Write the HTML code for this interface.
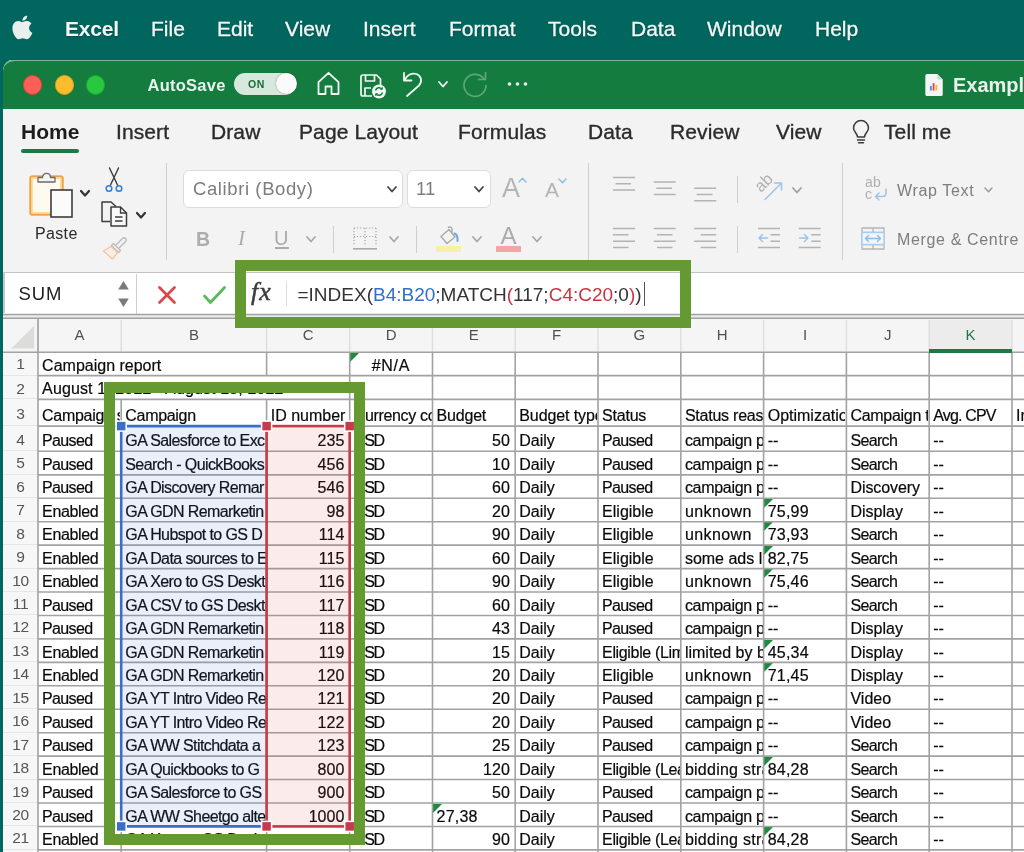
<!DOCTYPE html>
<html lang="en">
<head>
<meta charset="utf-8">
<title>Excel - INDEX MATCH example</title>
<style>
*{box-sizing:border-box;margin:0;padding:0}
html,body{width:1024px;height:852px;overflow:hidden;background:#01665e;}
body{position:relative;font-family:"Liberation Sans",sans-serif;color:#222;}
.abs{position:absolute}
/* ---------- mac menu bar ---------- */
#menubar{position:absolute;left:0;top:0;width:1024px;height:60px;background:#01665e;z-index:2}
#menubar span{position:absolute;top:17px;font-size:21px;line-height:24px;color:#f4f7f6;white-space:nowrap;text-shadow:0 1px 2px rgba(0,0,0,.25);letter-spacing:0;-webkit-text-stroke:.3px #f4f7f6}
#menubar span.b{font-weight:bold;letter-spacing:-.2px;-webkit-text-stroke:0}
/* ---------- window ---------- */
#win{position:absolute;left:3px;top:59px;width:1030px;height:800px;background:#f3f3f3;border-top-left-radius:12px;overflow:hidden;}
#titlebar{position:absolute;left:0;top:0;width:100%;height:50px;background:#157c40;border-top:2px solid #7ab395;border-top-left-radius:12px;}
.tl{position:absolute;top:14px;width:19.500px;height:19.500px;border-radius:50%;}
#titlebar .t{position:absolute;color:#e9f3ec;font-weight:bold;white-space:nowrap}
/* ---------- ribbon ---------- */
#tabs span{position:absolute;top:119px;font-size:21px;line-height:26px;color:#2b2b2b;white-space:nowrap;-webkit-text-stroke:0.35px #2b2b2b;letter-spacing:.1px}
#tabs span.b{font-weight:bold;-webkit-text-stroke:0;color:#1d1d1d;letter-spacing:0}
.vsep{position:absolute;width:1px;background:#cfcfcf}
.dd{position:absolute;background:#fff;border:1px solid #dcdcdc;border-radius:6px;}
.gtxt{position:absolute;color:#7d7d7d;white-space:nowrap}
svg{position:absolute;overflow:visible}
/* ---------- formula bar ---------- */
#fbar{position:absolute;left:3px;top:272px;width:1021px;height:42px;background:#fff;border-top:1px solid #c4c4c4;}
/* ---------- grid ---------- */
#grid{position:absolute;left:0;top:0;width:1024px;height:852px}
#sheet{position:absolute;left:3px;top:319px;width:1021px;height:540px;background:#fff}
#colhdr{position:absolute;left:3px;top:314px;width:1021px;height:38px;background:#f5f5f5;border-top:4px solid #ebebeb;}
#rowhdr{position:absolute;left:3px;top:352px;width:35px;height:500px;background:#f7f7f7}
.ch{position:absolute;top:323.300px;height:24px;line-height:24px;font-size:15px;color:#505050;text-align:center}
.hs{position:absolute;top:321px;width:1.400px;height:31px;background:#dedede}
.hl{position:absolute;left:38px;width:986px;height:1.400px;background:#b9b9b9}
.vl{position:absolute;top:352px;width:1.400px;height:500px;background:#b9b9b9}
.rn{position:absolute;left:3px;width:35px;font-size:15.500px;letter-spacing:-.3px;color:#555;text-align:center;border-bottom:1px solid #e6e6e6}
.c{position:absolute;font-size:16px;color:#0a0a0a;-webkit-text-stroke:.2px #0a0a0a;white-space:nowrap;overflow:hidden;padding-left:3.600px;background:#fff}
.c.r{text-align:right;padding-right:4.500px}
.c.ov{overflow:visible;background:transparent}
.c.ctr{text-align:center;padding-left:0}
.tri{position:absolute;left:0;top:0;width:0;height:0;border-top:9px solid #1e8a3e;border-right:9px solid transparent}
#ov{z-index:5}
#menubar,#win,#fbar,#grid{will-change:transform}
</style>
</head>
<body>
<!-- ======= macOS menu bar ======= -->
<div id="menubar">
  <svg style="left:12px;top:15px" width="22" height="26" viewBox="0 0 22 26"><path fill="#e9efee" d="M15.2 0.4c0.1 1.4-0.4 2.7-1.2 3.7-0.9 1-2.2 1.8-3.5 1.7-0.2-1.3 0.4-2.7 1.2-3.6 0.9-1 2.400-1.700 3.500-1.800zM19.500 8.800c-1.500 0.900-2.400 2.400-2.400 4.200 0 2.100 1.300 3.900 3.200 4.700-0.400 1.300-1 2.500-1.700 3.600-1 1.500-2.100 3-3.800 3-1.600 0-2.100-1-4-1s-2.500 1-4 1c-1.700 0.100-2.900-1.600-3.900-3.100-2-3-3.600-8.500-1.500-12.200 1-1.800 2.900-3 4.900-3 1.600 0 3 1.100 4 1.100 0.900 0 2.700-1.300 4.600-1.100 0.800 0 3 0.300 4.600 2.800z"/></svg>
  <span class="b" style="left:65px">Excel</span>
  <span style="left:151px">File</span>
  <span style="left:217px">Edit</span>
  <span style="left:285px">View</span>
  <span style="left:363px">Insert</span>
  <span style="left:449px">Format</span>
  <span style="left:548px">Tools</span>
  <span style="left:631px">Data</span>
  <span style="left:707px">Window</span>
  <span style="left:815px">Help</span>
</div>

<!-- ======= Excel window ======= -->
<div id="win">
  <div id="titlebar">
    <div class="tl" style="left:19.800px;background:#fe5f57;border:1px solid #d9453d"></div>
    <div class="tl" style="left:51.500px;background:#febc2e;border:1px solid #d9a020"></div>
    <div class="tl" style="left:82.500px;background:#28c840;border:1px solid #1fa533"></div>
    <div class="t" style="left:144.5px;top:12px;font-size:16.500px;line-height:24px;letter-spacing:.25px">AutoSave</div>
    <!-- toggle -->
    <div class="abs" style="left:231px;top:11.5px;width:62px;height:22px;border-radius:11px;background:#d7e9dd;"></div>
    <div class="abs" style="left:245px;top:15.5px;font-size:10.5px;line-height:14px;font-weight:bold;color:#1b6b3b;letter-spacing:.6px">ON</div>
    <div class="abs" style="left:272.5px;top:12px;width:21px;height:21px;border-radius:50%;background:#fafafa;box-shadow:0 0 2px rgba(0,0,0,.4)"></div>
    <!-- home icon -->
    <svg style="left:313.5px;top:10px" width="24" height="25" viewBox="0 0 24 25"><path d="M1.500 11.200 L11.500 1.800 L21.500 11.200 V23 H14.500 V15.500 H8.500 V23 H1.500 Z" fill="none" stroke="#f2f8f4" stroke-width="1.800" stroke-linejoin="round"/></svg>
    <!-- save icon -->
    <svg style="left:356.5px;top:13px" width="27" height="25" viewBox="0 0 27 25"><path d="M3 1 H16.500 L20.500 5 V12 M12 22 H3 Q1 22 1 20 V3 Q1 1 3 1 M5.500 1 V7 H14.500 V1 M5 22 V14 H11" fill="none" stroke="#f2f8f4" stroke-width="1.700" stroke-linejoin="round"/><circle cx="19" cy="17.500" r="7" fill="#f2f8f4"/><path d="M15.500 16.500 a3.800 3.800 0 0 1 6.500 -1.500 M22.500 18.500 a3.800 3.800 0 0 1 -6.500 1.500" fill="none" stroke="#157c40" stroke-width="1.500"/><path d="M22.800 12.800 v3 h-3 z M15.200 22.200 v-3 h3 z" fill="#157c40"/></svg>
    <!-- undo -->
    <svg style="left:399.2px;top:10px" width="22" height="26" viewBox="0 0 22 26"><path d="M2 2 V9.500 H9.500 M2.500 9 C5 4 10 1.500 14.500 3 C19.500 5 20.500 10.500 17 14.500 L5 25" fill="none" stroke="#f2f8f4" stroke-width="1.800" stroke-linecap="round" stroke-linejoin="round"/></svg>
    <svg style="left:434.7px;top:20px" width="10" height="7" viewBox="0 0 10 7"><path d="M1 1 L5 5.500 L9 1" fill="none" stroke="#f2f8f4" stroke-width="1.800" stroke-linecap="round" stroke-linejoin="round"/></svg>
    <!-- redo (dim) -->
    <svg style="left:458.5px;top:10px" width="26" height="26" viewBox="0 0 26 26"><path d="M22 8 A 11 11 0 1 0 24 14.500 M16.500 8.500 H23.500 V1.500" fill="none" stroke="#5fa67b" stroke-width="1.700" stroke-linecap="round" stroke-linejoin="round"/></svg>
    <svg style="left:503px;top:20px" width="24" height="6" viewBox="0 0 24 6"><circle cx="3.500" cy="3" r="1.800" fill="#e9f3ec"/><circle cx="11.500" cy="3" r="1.800" fill="#e9f3ec"/><circle cx="19.500" cy="3" r="1.800" fill="#e9f3ec"/></svg>
    <!-- doc icon -->
    <svg style="left:922px;top:13px" width="19" height="22" viewBox="0 0 20 24"><path d="M2 0 H13 L19 6 V22 Q19 24 17 24 H2 Q0 24 0 22 V2 Q0 0 2 0Z" fill="#f4f6f5"/><path d="M13 0 L19 6 H14 Q13 6 13 5Z" fill="#cfd8d3"/><rect x="5" y="13" width="2" height="5" fill="#4c8bf5"/><rect x="8" y="10" width="2" height="8" fill="#e8453c"/><rect x="11" y="12" width="2" height="6" fill="#f9bb2d"/></svg>
    <div class="t" style="left:950px;top:11px;font-size:20px;line-height:26px;">Example</div>
  </div>

  <!-- tabs -->
  <div id="tabs" style="position:absolute;left:-3px;top:-59px">
    <span class="b" style="left:21px">Home</span>
    <span style="left:116px">Insert</span>
    <span style="left:211px">Draw</span>
    <span style="left:299px">Page Layout</span>
    <span style="left:458px">Formulas</span>
    <span style="left:588px">Data</span>
    <span style="left:670px">Review</span>
    <span style="left:776px">View</span>
    <span style="left:884px">Tell me</span>
    <div class="abs" style="left:21px;top:149px;width:58px;height:4px;border-radius:2px;background:#1b7a43"></div>
    <!-- lightbulb -->
    <svg style="left:852px;top:120px" width="18" height="24" viewBox="0 0 18 24"><path d="M5.500 17 C5.500 13.500 1.500 12 1.500 8 A7.500 7.500 0 0 1 16.500 8 C16.500 12 12.500 13.500 12.500 17 Z M5.500 20 H12.500 M6.500 22.800 H11.500" fill="none" stroke="#3a3a3a" stroke-width="1.500" stroke-linecap="round" stroke-linejoin="round"/></svg>
  </div>
  <div id="ribbon" style="position:absolute;left:-3px;top:-59px;width:1024px;height:272px">
    <!-- Paste -->
    <svg style="left:29px;top:169px" width="45" height="50" viewBox="0 0 45 50">
      <rect x="2" y="8" width="31" height="37" rx="1.500" fill="#fffaf0" stroke="#f6d58a" stroke-width="3.500"/><rect x="1.200" y="7.200" width="32.600" height="38.600" rx="2" fill="none" stroke="#f0a04a" stroke-width="1.600"/>
      <path d="M9 13 V8.500 H13.500 C13.500 3 21.500 3 21.500 8.500 H26 V13 Z" fill="#f4f4f4" stroke="#6a6a6a" stroke-width="1.300" stroke-linejoin="round"/>
      <rect x="22" y="21" width="21" height="27" fill="#fbfbfb" stroke="#3c3c3c" stroke-width="1.600"/>
    </svg>
    <svg style="left:80px;top:190px" width="10" height="7" viewBox="0 0 10 7"><path d="M1 1 L5 5.500 L9 1" fill="none" stroke="#333" stroke-width="2.200" stroke-linecap="round" stroke-linejoin="round"/></svg>
    <div class="abs" style="left:35px;top:223px;font-size:16px;line-height:22px;color:#2a2a2a;letter-spacing:.35px">Paste</div>
    <!-- scissors -->
    <svg style="left:105px;top:167px" width="18" height="26" viewBox="0 0 18 26">
      <path d="M4.500 1 L12.500 18 M13.500 1 L5.500 18" stroke="#3c3c3c" stroke-width="1.400" stroke-linecap="round" fill="none"/>
      <circle cx="4" cy="21.500" r="2.800" fill="none" stroke="#2f7fd6" stroke-width="1.500"/>
      <circle cx="14" cy="21.500" r="2.800" fill="none" stroke="#2f7fd6" stroke-width="1.500"/>
    </svg>
    <!-- copy -->
    <svg style="left:101px;top:201px" width="27" height="26" viewBox="0 0 27 26">
      <path d="M9 20.500 H1 V1 H10 L15 5.500" fill="none" stroke="#3c3c3c" stroke-width="1.500" stroke-linejoin="round"/>
      <path d="M10 6 H19.500 L25.500 12 V25 H10 Z" fill="#f8f8f8" stroke="#3c3c3c" stroke-width="1.500" stroke-linejoin="round"/>
      <path d="M19.500 6 V12 H25.500 M14 16 H21.500 M14 20 H21.500" fill="none" stroke="#3c3c3c" stroke-width="1.300"/>
    </svg>
    <svg style="left:136px;top:212px" width="10" height="7" viewBox="0 0 10 7"><path d="M1 1 L5 5.500 L9 1" fill="none" stroke="#333" stroke-width="2.200" stroke-linecap="round" stroke-linejoin="round"/></svg>
    <!-- format painter (dim) -->
    <svg style="left:102px;top:236px" width="26" height="24" viewBox="0 0 26 24">
      <path d="M14 9 L20.500 2.500 Q22 1 23.500 2.500 Q25 4 23.500 5.500 L17 12" fill="none" stroke="#b9b9b9" stroke-width="1.400"/>
      <path d="M11.500 7.500 L18.500 14.500 L16.500 16.500 L9.500 9.500 Z" fill="#f5f5f5" stroke="#b9b9b9" stroke-width="1.300"/>
      <path d="M9 10.500 L1.500 15 L10.500 23 L15.500 16.500 Z" fill="#fdeee3" stroke="#f3c3a4" stroke-width="1.300" stroke-linejoin="round"/>
    </svg>
    <div class="vsep" style="left:166px;top:163px;height:97px"></div>

    <!-- font name -->
    <div class="dd" style="left:183px;top:170px;width:220px;height:38px"></div>
    <div class="gtxt" style="left:193px;top:176px;font-size:18.500px;line-height:26px;letter-spacing:.6px">Calibri (Body)</div>
    <svg style="left:387px;top:186px" width="10" height="7" viewBox="0 0 10 7"><path d="M1 1 L5 5.500 L9 1" fill="none" stroke="#444" stroke-width="1.800" stroke-linecap="round" stroke-linejoin="round"/></svg>
    <!-- font size -->
    <div class="dd" style="left:407px;top:170px;width:84px;height:38px"></div>
    <div class="gtxt" style="left:416px;top:176px;font-size:18.500px;line-height:26px;">11</div>
    <svg style="left:474px;top:186px" width="10" height="7" viewBox="0 0 10 7"><path d="M1 1 L5 5.500 L9 1" fill="none" stroke="#444" stroke-width="1.800" stroke-linecap="round" stroke-linejoin="round"/></svg>
    <!-- grow / shrink -->
    <div class="abs" style="left:502px;top:173px;font-size:27px;line-height:30px;color:#b4b4b4">A</div>
    <svg style="left:518px;top:177px" width="9" height="6" viewBox="0 0 9 6"><path d="M1 5 L4.500 1.200 L8 5" fill="none" stroke="#8fbde8" stroke-width="1.500" stroke-linecap="round" stroke-linejoin="round"/></svg>
    <div class="abs" style="left:545px;top:178px;font-size:21px;line-height:24px;color:#b4b4b4">A</div>
    <svg style="left:558px;top:178px" width="9" height="6" viewBox="0 0 9 6"><path d="M1 1 L4.500 4.800 L8 1" fill="none" stroke="#8fbde8" stroke-width="1.500" stroke-linecap="round" stroke-linejoin="round"/></svg>

    <!-- B I U -->
    <div class="abs" style="left:196px;top:225.500px;font-size:19.500px;line-height:26px;font-weight:bold;color:#adadad">B</div>
    <div class="abs" style="left:238px;top:225px;font-size:21px;line-height:26px;font-style:italic;color:#ababab;font-family:'Liberation Serif',serif">I</div>
    <div class="abs" style="left:274px;top:225px;font-size:20px;line-height:26px;color:#ababab">U</div>
    <div class="abs" style="left:275px;top:247px;width:14px;height:1.500px;background:#ababab"></div>
    <svg style="left:306px;top:236px" width="10" height="7" viewBox="0 0 10 7"><path d="M1 1 L5 5.500 L9 1" fill="none" stroke="#a8a8a8" stroke-width="1.800" stroke-linecap="round" stroke-linejoin="round"/></svg>
    <div class="vsep" style="left:333px;top:226px;height:27px"></div>
    <!-- borders -->
    <svg style="left:353px;top:227px" width="24" height="23" viewBox="0 0 24 23">
      <path d="M1 1 H23 M1 1 V18 M23 1 V18 M12 1 V18 M1 9.500 H23" fill="none" stroke="#a9a9a9" stroke-width="1.200" stroke-dasharray="1.200 1.800"/>
      <path d="M0 21.800 H24" stroke="#a9a9a9" stroke-width="1.600"/>
    </svg>
    <svg style="left:389px;top:236px" width="10" height="7" viewBox="0 0 10 7"><path d="M1 1 L5 5.500 L9 1" fill="none" stroke="#a8a8a8" stroke-width="1.800" stroke-linecap="round" stroke-linejoin="round"/></svg>
    <div class="vsep" style="left:416px;top:226px;height:27px"></div>
    <!-- fill -->
    <svg style="left:439px;top:226px" width="22" height="19" viewBox="0 0 22 19">
      <path d="M9 1.500 Q12 0 13 3 V7 M2 10.500 L10 3.500 L16 11 L8 17.500 Z" fill="none" stroke="#a9a9a9" stroke-width="1.400" stroke-linejoin="round"/>
      <path d="M15.500 7.500 Q19 8.500 18.500 15" fill="none" stroke="#6aa5e6" stroke-width="2" stroke-linecap="round"/>
    </svg>
    <div class="abs" style="left:436px;top:245.500px;width:25px;height:6px;background:#f6f1a4"></div>
    <svg style="left:472px;top:236px" width="10" height="7" viewBox="0 0 10 7"><path d="M1 1 L5 5.500 L9 1" fill="none" stroke="#a8a8a8" stroke-width="1.800" stroke-linecap="round" stroke-linejoin="round"/></svg>
    <!-- font colour -->
    <div class="abs" style="left:500.500px;top:221.500px;font-size:24px;line-height:28px;color:#ababab">A</div>
    <div class="abs" style="left:495.500px;top:245.500px;width:25px;height:6px;background:#f3a5a5"></div>
    <svg style="left:532px;top:236px" width="10" height="7" viewBox="0 0 10 7"><path d="M1 1 L5 5.500 L9 1" fill="none" stroke="#a8a8a8" stroke-width="1.800" stroke-linecap="round" stroke-linejoin="round"/></svg>

    <div class="vsep" style="left:588px;top:163px;height:97px"></div>
    <!-- vertical align -->
    <svg style="left:613px;top:176px" width="104" height="26" viewBox="0 0 104 26" stroke="#b3b3b3" stroke-width="1.500" fill="none">
      <path d="M0 1.500 H22 M2.500 7.700 H18 M0 14 H22"/>
      <path d="M40.700 6 H62.700 M43.200 12.200 H59 M40.700 18.500 H62.700"/>
      <path d="M81.200 12.200 H103.200 M83.700 18.500 H99.500 M81.200 24.700 H103.200"/>
    </svg>
    <div class="vsep" style="left:737px;top:176px;height:27px"></div>
    <!-- orientation -->
    <svg style="left:755px;top:174px" width="30" height="28" viewBox="0 0 30 28">
      <text x="0" y="0" transform="translate(6,19) rotate(-45)" font-family="Liberation Sans, sans-serif" font-size="16.500" fill="#b0b0b0">ab</text>
      <path d="M10 25.500 L26 9.500 M19.500 9 H26.500 V16" fill="none" stroke="#9cc4ec" stroke-width="1.500" stroke-linecap="round" stroke-linejoin="round"/>
    </svg>
    <svg style="left:792px;top:187px" width="10" height="7" viewBox="0 0 10 7"><path d="M1 1 L5 5.500 L9 1" fill="none" stroke="#a0a0a0" stroke-width="1.800" stroke-linecap="round" stroke-linejoin="round"/></svg>
    <!-- horizontal align -->
    <svg style="left:613px;top:227px" width="104" height="22" viewBox="0 0 104 22" stroke="#b3b3b3" stroke-width="1.500" fill="none">
      <path d="M0 1.500 H22 M0 7.800 H15.500 M0 14.200 H22 M0 20.500 H15.500"/>
      <path d="M40.700 1.500 H62.700 M44 7.800 H59.500 M40.700 14.200 H62.700 M44 20.500 H59.500"/>
      <path d="M81.200 1.500 H103.200 M87.700 7.800 H103.200 M81.200 14.200 H103.200 M87.700 20.500 H103.200"/>
    </svg>
    <div class="vsep" style="left:737px;top:226px;height:27px"></div>
    <!-- indent -->
    <svg style="left:758px;top:227px" width="64" height="22" viewBox="0 0 64 22" fill="none" stroke-width="1.500">
      <path d="M0 1.500 H22 M12.500 7.800 H22 M12.500 14.200 H22 M0 20.500 H22" stroke="#b3b3b3"/>
      <path d="M9.500 11 H1 M4.500 7.500 L1 11 L4.500 14.500" stroke="#9cc4ec" stroke-linecap="round" stroke-linejoin="round"/>
      <path d="M40.700 1.500 H62.700 M53.200 7.800 H62.700 M53.200 14.200 H62.700 M40.700 20.500 H62.700" stroke="#b3b3b3"/>
      <path d="M41.500 11 H50 M46.500 7.500 L50 11 L46.500 14.500" stroke="#9cc4ec" stroke-linecap="round" stroke-linejoin="round"/>
    </svg>
    <div class="vsep" style="left:842px;top:163px;height:97px"></div>
    <!-- wrap text -->
    <div class="abs" style="left:865px;top:175px;font-size:14px;line-height:14px;color:#b0b0b0;letter-spacing:.3px">ab</div>
    <div class="abs" style="left:865px;top:187px;font-size:14px;line-height:14px;color:#b0b0b0">c</div>
    <svg style="left:874px;top:188px" width="14" height="14" viewBox="0 0 14 14"><path d="M12 1 V5 Q12 8.500 8.500 8.500 H1.500 M5 5 L1.500 8.500 L5 12" fill="none" stroke="#9cc4ec" stroke-width="1.500" stroke-linecap="round" stroke-linejoin="round"/></svg>
    <div class="gtxt" style="left:897px;top:179.500px;font-size:16px;line-height:22px;letter-spacing:.65px">Wrap Text</div>
    <svg style="left:984px;top:187px" width="9" height="6" viewBox="0 0 9 6"><path d="M1 1 L4.500 4.800 L8 1" fill="none" stroke="#9c9c9c" stroke-width="1.500" stroke-linecap="round" stroke-linejoin="round"/></svg>
    <!-- merge -->
    <svg style="left:861px;top:227px" width="24" height="23" viewBox="0 0 24 23">
      <path d="M1 1 H23 V22 H1 Z M1 5.500 H23 M1 17.500 H23 M12 1 V5.500 M12 17.500 V22" fill="none" stroke="#b5b5b5" stroke-width="1.300"/>
      <rect x="1" y="5.500" width="22" height="12" fill="#eef5fc" stroke="#a9cbee" stroke-width="1.300"/>
      <path d="M4.500 11.500 H19.500 M7.500 8.500 L4.500 11.500 L7.500 14.500 M16.500 8.500 L19.500 11.500 L16.500 14.500" fill="none" stroke="#8fbbe9" stroke-width="1.400" stroke-linecap="round" stroke-linejoin="round"/>
    </svg>
    <div class="gtxt" style="left:897px;top:229px;font-size:16px;line-height:22px;letter-spacing:.65px">Merge &amp; Centre</div>
</div>

</div>

<div id="fbar">
  <!-- inner coords: x = page-3, y = page-273 -->
  <div class="abs" style="left:15.500px;top:7.800px;font-size:18.500px;line-height:26px;color:#222;letter-spacing:.9px">SUM</div>
  <svg style="left:114.500px;top:8px" width="11" height="27" viewBox="0 0 11 27"><path d="M5.500 0 L10.800 8.500 H0.200 Z M5.500 26 L10.800 17.500 H0.200 Z" fill="#7a7a7a"/></svg>
  <div class="abs" style="left:132.600px;top:1px;width:1.600px;height:40px;background:#cfcfcf"></div>
  <div class="abs" style="left:0.300px;top:0;width:1.300px;height:40px;background:#c9c9c9"></div>
  <!-- cancel / enter -->
  <svg style="left:155px;top:13px" width="18" height="18" viewBox="0 0 18 18"><path d="M1.500 1.500 L16.500 16.500 M16.500 1.500 L1.500 16.500" stroke="#d8494d" stroke-width="2.800" stroke-linecap="round"/></svg>
  <svg style="left:200px;top:13px" width="23" height="19" viewBox="0 0 23 19"><path d="M1.500 10 L7.500 16.500 L21.500 1.500" fill="none" stroke="#5cb85c" stroke-width="2.800" stroke-linecap="round" stroke-linejoin="round"/></svg>
  <!-- fx -->
  <div class="abs" style="left:248px;top:4px;font-family:'Liberation Serif',serif;font-style:italic;font-size:26px;line-height:30px;color:#3d3d3d;letter-spacing:1px;-webkit-text-stroke:.5px #3d3d3d">fx</div>
  <div class="abs" style="left:282.500px;top:8px;width:1px;height:25px;background:#dcdcdc"></div>
  <div class="abs" id="ftext" style="left:294.500px;top:8px;font-size:19px;line-height:27px;color:#333;white-space:nowrap;">=INDEX(<span style="color:#2f6fc9">B4:B20</span>;MATCH<span style="color:#c8343f">(</span>117;<span style="color:#c8343f">C4:C20</span>;0<span style="color:#c8343f">)</span>)</div>
  <div class="abs" style="left:641px;top:9px;width:1px;height:24px;background:#555"></div>
</div>

<div id="sheet"></div><div id="colhdr"></div><div id="rowhdr"></div>
<div id="grid">
<div class="ch" style="left:38.0px;width:83.2px;">A</div>
<div class="ch" style="left:121.2px;width:145.4px;">B</div>
<div class="ch" style="left:266.6px;width:83.1px;">C</div>
<div class="ch" style="left:349.7px;width:82.8px;">D</div>
<div class="ch" style="left:432.5px;width:82.7px;">E</div>
<div class="ch" style="left:515.2px;width:82.8px;">F</div>
<div class="ch" style="left:598.0px;width:82.8px;">G</div>
<div class="ch" style="left:680.8px;width:82.8px;">H</div>
<div class="ch" style="left:763.6px;width:82.8px;">I</div>
<div class="ch" style="left:846.4px;width:82.8px;">J</div>
<div class="abs" style="left:929.2px;top:320px;width:82.8px;height:32px;background:#ececec"></div>
<div class="abs" style="left:929.2px;top:349.300px;width:82.8px;height:3.500px;background:#1b7a43;z-index:4"></div>
<div class="ch" style="left:929.2px;width:82.8px;color:#1b7a43;">K</div>
<svg style="left:0;top:0" width="1024" height="852" viewBox="0 0 1024 852"><path d="M38.0 320V352 M121.2 320V352 M266.6 320V352 M349.7 320V352 M432.5 320V352 M515.2 320V352 M598.0 320V352 M680.8 320V352 M763.6 320V352 M846.4 320V352 M929.2 320V352 M1012.0 320V352" fill="none" stroke="#dedede" stroke-width="1.400"/></svg>
<svg style="left:0;top:0" width="40" height="352" viewBox="0 0 40 352"><path d="M34.200 325.700 V348.600 H11.300 Z" fill="#dcdcda"/></svg>
<div class="rn" style="top:352.20px;height:23.40px;line-height:24.20px">1</div>
<div class="rn" style="top:375.60px;height:23.80px;line-height:25.00px">2</div>
<div class="rn" style="top:399.40px;height:26.70px;line-height:30.80px">3</div>
<div class="rn" style="top:426.10px;height:25.20px;line-height:27.80px">4</div>
<div class="rn" style="top:451.30px;height:23.54px;line-height:24.48px">5</div>
<div class="rn" style="top:474.84px;height:23.44px;line-height:24.28px">6</div>
<div class="rn" style="top:498.28px;height:23.44px;line-height:24.28px">7</div>
<div class="rn" style="top:521.72px;height:23.44px;line-height:24.28px">8</div>
<div class="rn" style="top:545.16px;height:23.44px;line-height:24.28px">9</div>
<div class="rn" style="top:568.60px;height:23.44px;line-height:24.28px">10</div>
<div class="rn" style="top:592.04px;height:23.44px;line-height:24.28px">11</div>
<div class="rn" style="top:615.48px;height:23.44px;line-height:24.28px">12</div>
<div class="rn" style="top:638.92px;height:23.44px;line-height:24.28px">13</div>
<div class="rn" style="top:662.36px;height:23.44px;line-height:24.28px">14</div>
<div class="rn" style="top:685.80px;height:23.44px;line-height:24.28px">15</div>
<div class="rn" style="top:709.24px;height:23.44px;line-height:24.28px">16</div>
<div class="rn" style="top:732.68px;height:23.44px;line-height:24.28px">17</div>
<div class="rn" style="top:756.12px;height:23.44px;line-height:24.28px">18</div>
<div class="rn" style="top:779.56px;height:23.44px;line-height:24.28px">19</div>
<div class="rn" style="top:803.00px;height:23.44px;line-height:24.28px">20</div>
<div class="rn" style="top:826.44px;height:23.44px;line-height:24.28px">21</div>
<div class="rn" style="top:849.88px;height:23.44px;line-height:24.28px">22</div>
<div class="c ov" style="left:38.5px;top:352.80px;width:81.8px;height:22.00px;line-height:25.20px;"><span>Campaign report</span></div>
<div class="c ctr" style="left:350.2px;top:352.80px;width:81.4px;height:22.00px;line-height:25.20px;letter-spacing:0.7px;"><i class="tri"></i><span>#N/A</span></div>
<div class="c ov" style="left:38.5px;top:376.20px;width:81.8px;height:22.40px;line-height:26.00px;letter-spacing:0.12px;"><span>August 1, 2022 - August 15, 2022</span></div>
<div class="c" style="left:38.5px;top:400.00px;width:81.8px;height:25.30px;line-height:31.80px;letter-spacing:-0.3px;"><span>Campaign s</span></div>
<div class="c" style="left:121.7px;top:400.00px;width:144.0px;height:25.30px;line-height:31.80px;letter-spacing:-0.3px;"><span>Campaign</span></div>
<div class="c" style="left:267.1px;top:400.00px;width:81.7px;height:25.30px;line-height:31.80px;"><span>ID number</span></div>
<div class="c" style="left:350.2px;top:400.00px;width:81.4px;height:25.30px;line-height:31.80px;letter-spacing:-0.35px;"><span>Currency co</span></div>
<div class="c" style="left:433.0px;top:400.00px;width:81.3px;height:25.30px;line-height:31.80px;letter-spacing:-0.2px;"><span>Budget</span></div>
<div class="c" style="left:515.7px;top:400.00px;width:81.4px;height:25.30px;line-height:31.80px;letter-spacing:-0.1px;"><span>Budget type</span></div>
<div class="c" style="left:598.5px;top:400.00px;width:81.4px;height:25.30px;line-height:31.80px;letter-spacing:-0.23px;"><span>Status</span></div>
<div class="c" style="left:681.3px;top:400.00px;width:81.4px;height:25.30px;line-height:31.80px;letter-spacing:-0.23px;"><span>Status reaso</span></div>
<div class="c" style="left:764.1px;top:400.00px;width:81.4px;height:25.30px;line-height:31.80px;"><span>Optimizatio</span></div>
<div class="c" style="left:846.9px;top:400.00px;width:81.4px;height:25.30px;line-height:31.80px;letter-spacing:-0.3px;"><span>Campaign t</span></div>
<div class="c" style="left:929.7px;top:400.00px;width:81.4px;height:25.30px;line-height:31.80px;letter-spacing:-0.85px;"><span>Avg. CPV</span></div>
<div class="c" style="left:1012.5px;top:400.00px;width:81.6px;height:25.30px;line-height:31.80px;"><span>In</span></div>
<div class="c" style="left:38.5px;top:426.70px;width:81.8px;height:23.80px;line-height:28.80px;letter-spacing:-0.66px;"><span>Paused</span></div>
<div class="c" style="left:121.7px;top:426.70px;width:144.0px;height:23.80px;line-height:28.80px;letter-spacing:-0.6px;"><span>GA Salesforce to Exc</span></div>
<div class="c r" style="left:267.1px;top:426.70px;width:81.7px;height:23.80px;line-height:28.80px;"><span>235</span></div>
<div class="c" style="left:350.2px;top:426.70px;width:81.4px;height:23.80px;line-height:28.80px;letter-spacing:-1.2px;"><span>USD</span></div>
<div class="c r" style="left:433.0px;top:426.70px;width:81.3px;height:23.80px;line-height:28.80px;"><span>50</span></div>
<div class="c" style="left:515.7px;top:426.70px;width:81.4px;height:23.80px;line-height:28.80px;"><span>Daily</span></div>
<div class="c" style="left:598.5px;top:426.70px;width:81.4px;height:23.80px;line-height:28.80px;letter-spacing:-0.66px;"><span>Paused</span></div>
<div class="c" style="left:681.3px;top:426.70px;width:81.4px;height:23.80px;line-height:28.80px;letter-spacing:-0.3px;"><span>campaign p</span></div>
<div class="c" style="left:764.1px;top:426.70px;width:81.4px;height:23.80px;line-height:28.80px;"><span>--</span></div>
<div class="c" style="left:846.9px;top:426.70px;width:81.4px;height:23.80px;line-height:28.80px;letter-spacing:-0.67px;"><span>Search</span></div>
<div class="c" style="left:929.7px;top:426.70px;width:81.4px;height:23.80px;line-height:28.80px;"><span>--</span></div>
<div class="c" style="left:38.5px;top:451.90px;width:81.8px;height:22.14px;line-height:25.48px;letter-spacing:-0.66px;"><span>Paused</span></div>
<div class="c" style="left:121.7px;top:451.90px;width:144.0px;height:22.14px;line-height:25.48px;letter-spacing:-0.6px;"><span>Search - QuickBooks</span></div>
<div class="c r" style="left:267.1px;top:451.90px;width:81.7px;height:22.14px;line-height:25.48px;"><span>456</span></div>
<div class="c" style="left:350.2px;top:451.90px;width:81.4px;height:22.14px;line-height:25.48px;letter-spacing:-1.2px;"><span>USD</span></div>
<div class="c r" style="left:433.0px;top:451.90px;width:81.3px;height:22.14px;line-height:25.48px;"><span>10</span></div>
<div class="c" style="left:515.7px;top:451.90px;width:81.4px;height:22.14px;line-height:25.48px;"><span>Daily</span></div>
<div class="c" style="left:598.5px;top:451.90px;width:81.4px;height:22.14px;line-height:25.48px;letter-spacing:-0.66px;"><span>Paused</span></div>
<div class="c" style="left:681.3px;top:451.90px;width:81.4px;height:22.14px;line-height:25.48px;letter-spacing:-0.3px;"><span>campaign p</span></div>
<div class="c" style="left:764.1px;top:451.90px;width:81.4px;height:22.14px;line-height:25.48px;"><span>--</span></div>
<div class="c" style="left:846.9px;top:451.90px;width:81.4px;height:22.14px;line-height:25.48px;letter-spacing:-0.67px;"><span>Search</span></div>
<div class="c" style="left:929.7px;top:451.90px;width:81.4px;height:22.14px;line-height:25.48px;"><span>--</span></div>
<div class="c" style="left:38.5px;top:475.44px;width:81.8px;height:22.04px;line-height:25.28px;letter-spacing:-0.66px;"><span>Paused</span></div>
<div class="c" style="left:121.7px;top:475.44px;width:144.0px;height:22.04px;line-height:25.28px;letter-spacing:-0.6px;"><span>GA Discovery Remar</span></div>
<div class="c r" style="left:267.1px;top:475.44px;width:81.7px;height:22.04px;line-height:25.28px;"><span>546</span></div>
<div class="c" style="left:350.2px;top:475.44px;width:81.4px;height:22.04px;line-height:25.28px;letter-spacing:-1.2px;"><span>USD</span></div>
<div class="c r" style="left:433.0px;top:475.44px;width:81.3px;height:22.04px;line-height:25.28px;"><span>60</span></div>
<div class="c" style="left:515.7px;top:475.44px;width:81.4px;height:22.04px;line-height:25.28px;"><span>Daily</span></div>
<div class="c" style="left:598.5px;top:475.44px;width:81.4px;height:22.04px;line-height:25.28px;letter-spacing:-0.66px;"><span>Paused</span></div>
<div class="c" style="left:681.3px;top:475.44px;width:81.4px;height:22.04px;line-height:25.28px;letter-spacing:-0.3px;"><span>campaign p</span></div>
<div class="c" style="left:764.1px;top:475.44px;width:81.4px;height:22.04px;line-height:25.28px;"><span>--</span></div>
<div class="c" style="left:846.9px;top:475.44px;width:81.4px;height:22.04px;line-height:25.28px;letter-spacing:-0.08px;"><span>Discovery</span></div>
<div class="c" style="left:929.7px;top:475.44px;width:81.4px;height:22.04px;line-height:25.28px;"><span>--</span></div>
<div class="c" style="left:38.5px;top:498.88px;width:81.8px;height:22.04px;line-height:25.28px;letter-spacing:-0.36px;"><span>Enabled</span></div>
<div class="c" style="left:121.7px;top:498.88px;width:144.0px;height:22.04px;line-height:25.28px;letter-spacing:-0.6px;"><span>GA GDN Remarketin</span></div>
<div class="c r" style="left:267.1px;top:498.88px;width:81.7px;height:22.04px;line-height:25.28px;"><span>98</span></div>
<div class="c" style="left:350.2px;top:498.88px;width:81.4px;height:22.04px;line-height:25.28px;letter-spacing:-1.2px;"><span>USD</span></div>
<div class="c r" style="left:433.0px;top:498.88px;width:81.3px;height:22.04px;line-height:25.28px;"><span>20</span></div>
<div class="c" style="left:515.7px;top:498.88px;width:81.4px;height:22.04px;line-height:25.28px;"><span>Daily</span></div>
<div class="c" style="left:598.5px;top:498.88px;width:81.4px;height:22.04px;line-height:25.28px;"><span>Eligible</span></div>
<div class="c" style="left:681.3px;top:498.88px;width:81.4px;height:22.04px;line-height:25.28px;letter-spacing:0.42px;"><span>unknown</span></div>
<div class="c" style="left:764.1px;top:498.88px;width:81.4px;height:22.04px;line-height:25.28px;letter-spacing:0.2px;"><i class="tri"></i><span>75,99</span></div>
<div class="c" style="left:846.9px;top:498.88px;width:81.4px;height:22.04px;line-height:25.28px;"><span>Display</span></div>
<div class="c" style="left:929.7px;top:498.88px;width:81.4px;height:22.04px;line-height:25.28px;"><span>--</span></div>
<div class="c" style="left:38.5px;top:522.32px;width:81.8px;height:22.04px;line-height:25.28px;letter-spacing:-0.36px;"><span>Enabled</span></div>
<div class="c" style="left:121.7px;top:522.32px;width:144.0px;height:22.04px;line-height:25.28px;letter-spacing:-0.6px;"><span>GA Hubspot to GS D</span></div>
<div class="c r" style="left:267.1px;top:522.32px;width:81.7px;height:22.04px;line-height:25.28px;"><span>114</span></div>
<div class="c" style="left:350.2px;top:522.32px;width:81.4px;height:22.04px;line-height:25.28px;letter-spacing:-1.2px;"><span>USD</span></div>
<div class="c r" style="left:433.0px;top:522.32px;width:81.3px;height:22.04px;line-height:25.28px;"><span>90</span></div>
<div class="c" style="left:515.7px;top:522.32px;width:81.4px;height:22.04px;line-height:25.28px;"><span>Daily</span></div>
<div class="c" style="left:598.5px;top:522.32px;width:81.4px;height:22.04px;line-height:25.28px;"><span>Eligible</span></div>
<div class="c" style="left:681.3px;top:522.32px;width:81.4px;height:22.04px;line-height:25.28px;letter-spacing:0.42px;"><span>unknown</span></div>
<div class="c" style="left:764.1px;top:522.32px;width:81.4px;height:22.04px;line-height:25.28px;letter-spacing:0.2px;"><i class="tri"></i><span>73,93</span></div>
<div class="c" style="left:846.9px;top:522.32px;width:81.4px;height:22.04px;line-height:25.28px;letter-spacing:-0.67px;"><span>Search</span></div>
<div class="c" style="left:929.7px;top:522.32px;width:81.4px;height:22.04px;line-height:25.28px;"><span>--</span></div>
<div class="c" style="left:38.5px;top:545.76px;width:81.8px;height:22.04px;line-height:25.28px;letter-spacing:-0.36px;"><span>Enabled</span></div>
<div class="c" style="left:121.7px;top:545.76px;width:144.0px;height:22.04px;line-height:25.28px;letter-spacing:-0.6px;"><span>GA Data sources to E</span></div>
<div class="c r" style="left:267.1px;top:545.76px;width:81.7px;height:22.04px;line-height:25.28px;"><span>115</span></div>
<div class="c" style="left:350.2px;top:545.76px;width:81.4px;height:22.04px;line-height:25.28px;letter-spacing:-1.2px;"><span>USD</span></div>
<div class="c r" style="left:433.0px;top:545.76px;width:81.3px;height:22.04px;line-height:25.28px;"><span>60</span></div>
<div class="c" style="left:515.7px;top:545.76px;width:81.4px;height:22.04px;line-height:25.28px;"><span>Daily</span></div>
<div class="c" style="left:598.5px;top:545.76px;width:81.4px;height:22.04px;line-height:25.28px;"><span>Eligible</span></div>
<div class="c" style="left:681.3px;top:545.76px;width:81.4px;height:22.04px;line-height:25.28px;"><span>some ads li</span></div>
<div class="c" style="left:764.1px;top:545.76px;width:81.4px;height:22.04px;line-height:25.28px;letter-spacing:0.2px;"><i class="tri"></i><span>82,75</span></div>
<div class="c" style="left:846.9px;top:545.76px;width:81.4px;height:22.04px;line-height:25.28px;letter-spacing:-0.67px;"><span>Search</span></div>
<div class="c" style="left:929.7px;top:545.76px;width:81.4px;height:22.04px;line-height:25.28px;"><span>--</span></div>
<div class="c" style="left:38.5px;top:569.20px;width:81.8px;height:22.04px;line-height:25.28px;letter-spacing:-0.36px;"><span>Enabled</span></div>
<div class="c" style="left:121.7px;top:569.20px;width:144.0px;height:22.04px;line-height:25.28px;letter-spacing:-0.6px;"><span>GA Xero to GS Deskt</span></div>
<div class="c r" style="left:267.1px;top:569.20px;width:81.7px;height:22.04px;line-height:25.28px;"><span>116</span></div>
<div class="c" style="left:350.2px;top:569.20px;width:81.4px;height:22.04px;line-height:25.28px;letter-spacing:-1.2px;"><span>USD</span></div>
<div class="c r" style="left:433.0px;top:569.20px;width:81.3px;height:22.04px;line-height:25.28px;"><span>90</span></div>
<div class="c" style="left:515.7px;top:569.20px;width:81.4px;height:22.04px;line-height:25.28px;"><span>Daily</span></div>
<div class="c" style="left:598.5px;top:569.20px;width:81.4px;height:22.04px;line-height:25.28px;"><span>Eligible</span></div>
<div class="c" style="left:681.3px;top:569.20px;width:81.4px;height:22.04px;line-height:25.28px;letter-spacing:0.42px;"><span>unknown</span></div>
<div class="c" style="left:764.1px;top:569.20px;width:81.4px;height:22.04px;line-height:25.28px;letter-spacing:0.2px;"><i class="tri"></i><span>75,46</span></div>
<div class="c" style="left:846.9px;top:569.20px;width:81.4px;height:22.04px;line-height:25.28px;letter-spacing:-0.67px;"><span>Search</span></div>
<div class="c" style="left:929.7px;top:569.20px;width:81.4px;height:22.04px;line-height:25.28px;"><span>--</span></div>
<div class="c" style="left:38.5px;top:592.64px;width:81.8px;height:22.04px;line-height:25.28px;letter-spacing:-0.66px;"><span>Paused</span></div>
<div class="c" style="left:121.7px;top:592.64px;width:144.0px;height:22.04px;line-height:25.28px;letter-spacing:-0.6px;"><span>GA CSV to GS Deskto</span></div>
<div class="c r" style="left:267.1px;top:592.64px;width:81.7px;height:22.04px;line-height:25.28px;"><span>117</span></div>
<div class="c" style="left:350.2px;top:592.64px;width:81.4px;height:22.04px;line-height:25.28px;letter-spacing:-1.2px;"><span>USD</span></div>
<div class="c r" style="left:433.0px;top:592.64px;width:81.3px;height:22.04px;line-height:25.28px;"><span>60</span></div>
<div class="c" style="left:515.7px;top:592.64px;width:81.4px;height:22.04px;line-height:25.28px;"><span>Daily</span></div>
<div class="c" style="left:598.5px;top:592.64px;width:81.4px;height:22.04px;line-height:25.28px;letter-spacing:-0.66px;"><span>Paused</span></div>
<div class="c" style="left:681.3px;top:592.64px;width:81.4px;height:22.04px;line-height:25.28px;letter-spacing:-0.3px;"><span>campaign p</span></div>
<div class="c" style="left:764.1px;top:592.64px;width:81.4px;height:22.04px;line-height:25.28px;"><span>--</span></div>
<div class="c" style="left:846.9px;top:592.64px;width:81.4px;height:22.04px;line-height:25.28px;letter-spacing:-0.67px;"><span>Search</span></div>
<div class="c" style="left:929.7px;top:592.64px;width:81.4px;height:22.04px;line-height:25.28px;"><span>--</span></div>
<div class="c" style="left:38.5px;top:616.08px;width:81.8px;height:22.04px;line-height:25.28px;letter-spacing:-0.66px;"><span>Paused</span></div>
<div class="c" style="left:121.7px;top:616.08px;width:144.0px;height:22.04px;line-height:25.28px;letter-spacing:-0.6px;"><span>GA GDN Remarketin</span></div>
<div class="c r" style="left:267.1px;top:616.08px;width:81.7px;height:22.04px;line-height:25.28px;"><span>118</span></div>
<div class="c" style="left:350.2px;top:616.08px;width:81.4px;height:22.04px;line-height:25.28px;letter-spacing:-1.2px;"><span>USD</span></div>
<div class="c r" style="left:433.0px;top:616.08px;width:81.3px;height:22.04px;line-height:25.28px;"><span>43</span></div>
<div class="c" style="left:515.7px;top:616.08px;width:81.4px;height:22.04px;line-height:25.28px;"><span>Daily</span></div>
<div class="c" style="left:598.5px;top:616.08px;width:81.4px;height:22.04px;line-height:25.28px;letter-spacing:-0.66px;"><span>Paused</span></div>
<div class="c" style="left:681.3px;top:616.08px;width:81.4px;height:22.04px;line-height:25.28px;letter-spacing:-0.3px;"><span>campaign p</span></div>
<div class="c" style="left:764.1px;top:616.08px;width:81.4px;height:22.04px;line-height:25.28px;"><span>--</span></div>
<div class="c" style="left:846.9px;top:616.08px;width:81.4px;height:22.04px;line-height:25.28px;"><span>Display</span></div>
<div class="c" style="left:929.7px;top:616.08px;width:81.4px;height:22.04px;line-height:25.28px;"><span>--</span></div>
<div class="c" style="left:38.5px;top:639.52px;width:81.8px;height:22.04px;line-height:25.28px;letter-spacing:-0.36px;"><span>Enabled</span></div>
<div class="c" style="left:121.7px;top:639.52px;width:144.0px;height:22.04px;line-height:25.28px;letter-spacing:-0.6px;"><span>GA GDN Remarketin</span></div>
<div class="c r" style="left:267.1px;top:639.52px;width:81.7px;height:22.04px;line-height:25.28px;"><span>119</span></div>
<div class="c" style="left:350.2px;top:639.52px;width:81.4px;height:22.04px;line-height:25.28px;letter-spacing:-1.2px;"><span>USD</span></div>
<div class="c r" style="left:433.0px;top:639.52px;width:81.3px;height:22.04px;line-height:25.28px;"><span>15</span></div>
<div class="c" style="left:515.7px;top:639.52px;width:81.4px;height:22.04px;line-height:25.28px;"><span>Daily</span></div>
<div class="c" style="left:598.5px;top:639.52px;width:81.4px;height:22.04px;line-height:25.28px;letter-spacing:-0.35px;"><span>Eligible (Lim</span></div>
<div class="c" style="left:681.3px;top:639.52px;width:81.4px;height:22.04px;line-height:25.28px;"><span>limited by b</span></div>
<div class="c" style="left:764.1px;top:639.52px;width:81.4px;height:22.04px;line-height:25.28px;letter-spacing:0.2px;"><i class="tri"></i><span>45,34</span></div>
<div class="c" style="left:846.9px;top:639.52px;width:81.4px;height:22.04px;line-height:25.28px;"><span>Display</span></div>
<div class="c" style="left:929.7px;top:639.52px;width:81.4px;height:22.04px;line-height:25.28px;"><span>--</span></div>
<div class="c" style="left:38.5px;top:662.96px;width:81.8px;height:22.04px;line-height:25.28px;letter-spacing:-0.36px;"><span>Enabled</span></div>
<div class="c" style="left:121.7px;top:662.96px;width:144.0px;height:22.04px;line-height:25.28px;letter-spacing:-0.6px;"><span>GA GDN Remarketin</span></div>
<div class="c r" style="left:267.1px;top:662.96px;width:81.7px;height:22.04px;line-height:25.28px;"><span>120</span></div>
<div class="c" style="left:350.2px;top:662.96px;width:81.4px;height:22.04px;line-height:25.28px;letter-spacing:-1.2px;"><span>USD</span></div>
<div class="c r" style="left:433.0px;top:662.96px;width:81.3px;height:22.04px;line-height:25.28px;"><span>20</span></div>
<div class="c" style="left:515.7px;top:662.96px;width:81.4px;height:22.04px;line-height:25.28px;"><span>Daily</span></div>
<div class="c" style="left:598.5px;top:662.96px;width:81.4px;height:22.04px;line-height:25.28px;"><span>Eligible</span></div>
<div class="c" style="left:681.3px;top:662.96px;width:81.4px;height:22.04px;line-height:25.28px;letter-spacing:0.42px;"><span>unknown</span></div>
<div class="c" style="left:764.1px;top:662.96px;width:81.4px;height:22.04px;line-height:25.28px;letter-spacing:0.2px;"><i class="tri"></i><span>71,45</span></div>
<div class="c" style="left:846.9px;top:662.96px;width:81.4px;height:22.04px;line-height:25.28px;"><span>Display</span></div>
<div class="c" style="left:929.7px;top:662.96px;width:81.4px;height:22.04px;line-height:25.28px;"><span>--</span></div>
<div class="c" style="left:38.5px;top:686.40px;width:81.8px;height:22.04px;line-height:25.28px;letter-spacing:-0.66px;"><span>Paused</span></div>
<div class="c" style="left:121.7px;top:686.40px;width:144.0px;height:22.04px;line-height:25.28px;letter-spacing:-0.6px;"><span>GA YT Intro Video Re</span></div>
<div class="c r" style="left:267.1px;top:686.40px;width:81.7px;height:22.04px;line-height:25.28px;"><span>121</span></div>
<div class="c" style="left:350.2px;top:686.40px;width:81.4px;height:22.04px;line-height:25.28px;letter-spacing:-1.2px;"><span>USD</span></div>
<div class="c r" style="left:433.0px;top:686.40px;width:81.3px;height:22.04px;line-height:25.28px;"><span>20</span></div>
<div class="c" style="left:515.7px;top:686.40px;width:81.4px;height:22.04px;line-height:25.28px;"><span>Daily</span></div>
<div class="c" style="left:598.5px;top:686.40px;width:81.4px;height:22.04px;line-height:25.28px;letter-spacing:-0.66px;"><span>Paused</span></div>
<div class="c" style="left:681.3px;top:686.40px;width:81.4px;height:22.04px;line-height:25.28px;letter-spacing:-0.3px;"><span>campaign p</span></div>
<div class="c" style="left:764.1px;top:686.40px;width:81.4px;height:22.04px;line-height:25.28px;"><span>--</span></div>
<div class="c" style="left:846.9px;top:686.40px;width:81.4px;height:22.04px;line-height:25.28px;"><span>Video</span></div>
<div class="c" style="left:929.7px;top:686.40px;width:81.4px;height:22.04px;line-height:25.28px;"><span>--</span></div>
<div class="c" style="left:38.5px;top:709.84px;width:81.8px;height:22.04px;line-height:25.28px;letter-spacing:-0.66px;"><span>Paused</span></div>
<div class="c" style="left:121.7px;top:709.84px;width:144.0px;height:22.04px;line-height:25.28px;letter-spacing:-0.6px;"><span>GA YT Intro Video Re</span></div>
<div class="c r" style="left:267.1px;top:709.84px;width:81.7px;height:22.04px;line-height:25.28px;"><span>122</span></div>
<div class="c" style="left:350.2px;top:709.84px;width:81.4px;height:22.04px;line-height:25.28px;letter-spacing:-1.2px;"><span>USD</span></div>
<div class="c r" style="left:433.0px;top:709.84px;width:81.3px;height:22.04px;line-height:25.28px;"><span>20</span></div>
<div class="c" style="left:515.7px;top:709.84px;width:81.4px;height:22.04px;line-height:25.28px;"><span>Daily</span></div>
<div class="c" style="left:598.5px;top:709.84px;width:81.4px;height:22.04px;line-height:25.28px;letter-spacing:-0.66px;"><span>Paused</span></div>
<div class="c" style="left:681.3px;top:709.84px;width:81.4px;height:22.04px;line-height:25.28px;letter-spacing:-0.3px;"><span>campaign p</span></div>
<div class="c" style="left:764.1px;top:709.84px;width:81.4px;height:22.04px;line-height:25.28px;"><span>--</span></div>
<div class="c" style="left:846.9px;top:709.84px;width:81.4px;height:22.04px;line-height:25.28px;"><span>Video</span></div>
<div class="c" style="left:929.7px;top:709.84px;width:81.4px;height:22.04px;line-height:25.28px;"><span>--</span></div>
<div class="c" style="left:38.5px;top:733.28px;width:81.8px;height:22.04px;line-height:25.28px;letter-spacing:-0.66px;"><span>Paused</span></div>
<div class="c" style="left:121.7px;top:733.28px;width:144.0px;height:22.04px;line-height:25.28px;letter-spacing:-0.6px;"><span>GA WW Stitchdata a</span></div>
<div class="c r" style="left:267.1px;top:733.28px;width:81.7px;height:22.04px;line-height:25.28px;"><span>123</span></div>
<div class="c" style="left:350.2px;top:733.28px;width:81.4px;height:22.04px;line-height:25.28px;letter-spacing:-1.2px;"><span>USD</span></div>
<div class="c r" style="left:433.0px;top:733.28px;width:81.3px;height:22.04px;line-height:25.28px;"><span>25</span></div>
<div class="c" style="left:515.7px;top:733.28px;width:81.4px;height:22.04px;line-height:25.28px;"><span>Daily</span></div>
<div class="c" style="left:598.5px;top:733.28px;width:81.4px;height:22.04px;line-height:25.28px;letter-spacing:-0.66px;"><span>Paused</span></div>
<div class="c" style="left:681.3px;top:733.28px;width:81.4px;height:22.04px;line-height:25.28px;letter-spacing:-0.3px;"><span>campaign p</span></div>
<div class="c" style="left:764.1px;top:733.28px;width:81.4px;height:22.04px;line-height:25.28px;"><span>--</span></div>
<div class="c" style="left:846.9px;top:733.28px;width:81.4px;height:22.04px;line-height:25.28px;letter-spacing:-0.67px;"><span>Search</span></div>
<div class="c" style="left:929.7px;top:733.28px;width:81.4px;height:22.04px;line-height:25.28px;"><span>--</span></div>
<div class="c" style="left:38.5px;top:756.72px;width:81.8px;height:22.04px;line-height:25.28px;letter-spacing:-0.36px;"><span>Enabled</span></div>
<div class="c" style="left:121.7px;top:756.72px;width:144.0px;height:22.04px;line-height:25.28px;letter-spacing:-0.6px;"><span>GA Quickbooks to G</span></div>
<div class="c r" style="left:267.1px;top:756.72px;width:81.7px;height:22.04px;line-height:25.28px;"><span>800</span></div>
<div class="c" style="left:350.2px;top:756.72px;width:81.4px;height:22.04px;line-height:25.28px;letter-spacing:-1.2px;"><span>USD</span></div>
<div class="c r" style="left:433.0px;top:756.72px;width:81.3px;height:22.04px;line-height:25.28px;"><span>120</span></div>
<div class="c" style="left:515.7px;top:756.72px;width:81.4px;height:22.04px;line-height:25.28px;"><span>Daily</span></div>
<div class="c" style="left:598.5px;top:756.72px;width:81.4px;height:22.04px;line-height:25.28px;letter-spacing:-0.35px;"><span>Eligible (Lea</span></div>
<div class="c" style="left:681.3px;top:756.72px;width:81.4px;height:22.04px;line-height:25.28px;letter-spacing:0.25px;"><span>bidding stra</span></div>
<div class="c" style="left:764.1px;top:756.72px;width:81.4px;height:22.04px;line-height:25.28px;letter-spacing:0.2px;"><i class="tri"></i><span>84,28</span></div>
<div class="c" style="left:846.9px;top:756.72px;width:81.4px;height:22.04px;line-height:25.28px;letter-spacing:-0.67px;"><span>Search</span></div>
<div class="c" style="left:929.7px;top:756.72px;width:81.4px;height:22.04px;line-height:25.28px;"><span>--</span></div>
<div class="c" style="left:38.5px;top:780.16px;width:81.8px;height:22.04px;line-height:25.28px;letter-spacing:-0.66px;"><span>Paused</span></div>
<div class="c" style="left:121.7px;top:780.16px;width:144.0px;height:22.04px;line-height:25.28px;letter-spacing:-0.6px;"><span>GA Salesforce to GS</span></div>
<div class="c r" style="left:267.1px;top:780.16px;width:81.7px;height:22.04px;line-height:25.28px;"><span>900</span></div>
<div class="c" style="left:350.2px;top:780.16px;width:81.4px;height:22.04px;line-height:25.28px;letter-spacing:-1.2px;"><span>USD</span></div>
<div class="c r" style="left:433.0px;top:780.16px;width:81.3px;height:22.04px;line-height:25.28px;"><span>50</span></div>
<div class="c" style="left:515.7px;top:780.16px;width:81.4px;height:22.04px;line-height:25.28px;"><span>Daily</span></div>
<div class="c" style="left:598.5px;top:780.16px;width:81.4px;height:22.04px;line-height:25.28px;letter-spacing:-0.66px;"><span>Paused</span></div>
<div class="c" style="left:681.3px;top:780.16px;width:81.4px;height:22.04px;line-height:25.28px;letter-spacing:-0.3px;"><span>campaign p</span></div>
<div class="c" style="left:764.1px;top:780.16px;width:81.4px;height:22.04px;line-height:25.28px;"><span>--</span></div>
<div class="c" style="left:846.9px;top:780.16px;width:81.4px;height:22.04px;line-height:25.28px;letter-spacing:-0.67px;"><span>Search</span></div>
<div class="c" style="left:929.7px;top:780.16px;width:81.4px;height:22.04px;line-height:25.28px;"><span>--</span></div>
<div class="c" style="left:38.5px;top:803.60px;width:81.8px;height:22.04px;line-height:25.28px;letter-spacing:-0.66px;"><span>Paused</span></div>
<div class="c" style="left:121.7px;top:803.60px;width:144.0px;height:22.04px;line-height:25.28px;letter-spacing:-0.6px;"><span>GA WW Sheetgo alte</span></div>
<div class="c r" style="left:267.1px;top:803.60px;width:81.7px;height:22.04px;line-height:25.28px;"><span>1000</span></div>
<div class="c" style="left:350.2px;top:803.60px;width:81.4px;height:22.04px;line-height:25.28px;letter-spacing:-1.2px;"><span>USD</span></div>
<div class="c" style="left:433.0px;top:803.60px;width:81.3px;height:22.04px;line-height:25.28px;letter-spacing:0.2px;"><i class="tri"></i><span>27,38</span></div>
<div class="c" style="left:515.7px;top:803.60px;width:81.4px;height:22.04px;line-height:25.28px;"><span>Daily</span></div>
<div class="c" style="left:598.5px;top:803.60px;width:81.4px;height:22.04px;line-height:25.28px;letter-spacing:-0.66px;"><span>Paused</span></div>
<div class="c" style="left:681.3px;top:803.60px;width:81.4px;height:22.04px;line-height:25.28px;letter-spacing:-0.3px;"><span>campaign p</span></div>
<div class="c" style="left:764.1px;top:803.60px;width:81.4px;height:22.04px;line-height:25.28px;"><span>--</span></div>
<div class="c" style="left:846.9px;top:803.60px;width:81.4px;height:22.04px;line-height:25.28px;letter-spacing:-0.67px;"><span>Search</span></div>
<div class="c" style="left:929.7px;top:803.60px;width:81.4px;height:22.04px;line-height:25.28px;"><span>--</span></div>
<div class="c" style="left:38.5px;top:827.04px;width:81.8px;height:22.04px;line-height:25.28px;letter-spacing:-0.36px;"><span>Enabled</span></div>
<div class="c" style="left:121.7px;top:827.04px;width:144.0px;height:22.04px;line-height:25.28px;letter-spacing:-0.6px;"><span>GA Xero to GS Deskt</span></div>
<div class="c" style="left:350.2px;top:827.04px;width:81.4px;height:22.04px;line-height:25.28px;letter-spacing:-1.2px;"><span>USD</span></div>
<div class="c r" style="left:433.0px;top:827.04px;width:81.3px;height:22.04px;line-height:25.28px;"><span>90</span></div>
<div class="c" style="left:515.7px;top:827.04px;width:81.4px;height:22.04px;line-height:25.28px;"><span>Daily</span></div>
<div class="c" style="left:598.5px;top:827.04px;width:81.4px;height:22.04px;line-height:25.28px;letter-spacing:-0.35px;"><span>Eligible (Lea</span></div>
<div class="c" style="left:681.3px;top:827.04px;width:81.4px;height:22.04px;line-height:25.28px;letter-spacing:0.25px;"><span>bidding stra</span></div>
<div class="c" style="left:764.1px;top:827.04px;width:81.4px;height:22.04px;line-height:25.28px;letter-spacing:0.2px;"><i class="tri"></i><span>84,28</span></div>
<div class="c" style="left:846.9px;top:827.04px;width:81.4px;height:22.04px;line-height:25.28px;letter-spacing:-0.67px;"><span>Search</span></div>
<div class="c" style="left:929.7px;top:827.04px;width:81.4px;height:22.04px;line-height:25.28px;"><span>--</span></div>
<svg style="left:0;top:0;z-index:3" width="1024" height="852" viewBox="0 0 1024 852"><path d="M3 314.5H1024 M3 318.3H1024 M3 352.20H1024 M38 375.60H1024 M38 399.40H1024 M38 426.10H1024 M38 451.30H1024 M38 474.84H1024 M38 498.28H1024 M38 521.72H1024 M38 545.16H1024 M38 568.60H1024 M38 592.04H1024 M38 615.48H1024 M38 638.92H1024 M38 662.36H1024 M38 685.80H1024 M38 709.24H1024 M38 732.68H1024 M38 756.12H1024 M38 779.56H1024 M38 803.00H1024 M38 826.44H1024 M38 849.88H1024 M38.0 319V852 M121.2 399.4V852 M266.6 352V375.6 M266.6 399.4V852 M349.7 352V852 M432.5 352V852 M515.2 352V852 M598.0 352V852 M680.8 352V852 M763.6 352V852 M846.4 352V852 M929.2 352V852 M1012.0 352V852" fill="none" stroke="#a2a2a2" stroke-width="1.600"/></svg>
</div>
<div id="ov" style="position:absolute;left:0;top:0;width:1024px;height:852px">
<svg style="left:0;top:0" width="1024" height="852" viewBox="0 0 1024 852">
<rect x="121.2" y="426.1" width="145.4" height="400.3" fill="#3f6fd0" fill-opacity=".11"/>
<rect x="266.6" y="426.1" width="83.1" height="400.3" fill="#d63a3a" fill-opacity=".10"/>
<path d="M121.2 426.1H266.6 M121.2 826.4H266.6 M121.2 426.1V826.4" fill="none" stroke="#3b6fc7" stroke-width="2.600"/>
<rect x="266.6" y="426.1" width="83.1" height="400.3" fill="none" stroke="#c73a4b" stroke-width="2.600"/>
<rect x="116.2" y="421.1" width="10" height="10" fill="#3b6fc7" stroke="#fff" stroke-width="1.500"/>
<rect x="116.2" y="821.4" width="10" height="10" fill="#3b6fc7" stroke="#fff" stroke-width="1.500"/>
<rect x="261.6" y="421.1" width="10" height="10" fill="#c73a4b" stroke="#fff" stroke-width="1.500"/>
<rect x="261.6" y="821.4" width="10" height="10" fill="#c73a4b" stroke="#fff" stroke-width="1.500"/>
<rect x="344.7" y="421.1" width="10" height="10" fill="#c73a4b" stroke="#fff" stroke-width="1.500"/>
<rect x="344.7" y="821.4" width="10" height="10" fill="#c73a4b" stroke="#fff" stroke-width="1.500"/>
</svg>
<div class="abs" style="left:235px;top:259.500px;width:456px;height:68.500px;border:11.500px solid #659a32"></div>
<div class="abs" style="left:103.500px;top:381.500px;width:261.500px;height:463px;border:11.500px solid #659a32"></div>
</div>
</body>
</html>
